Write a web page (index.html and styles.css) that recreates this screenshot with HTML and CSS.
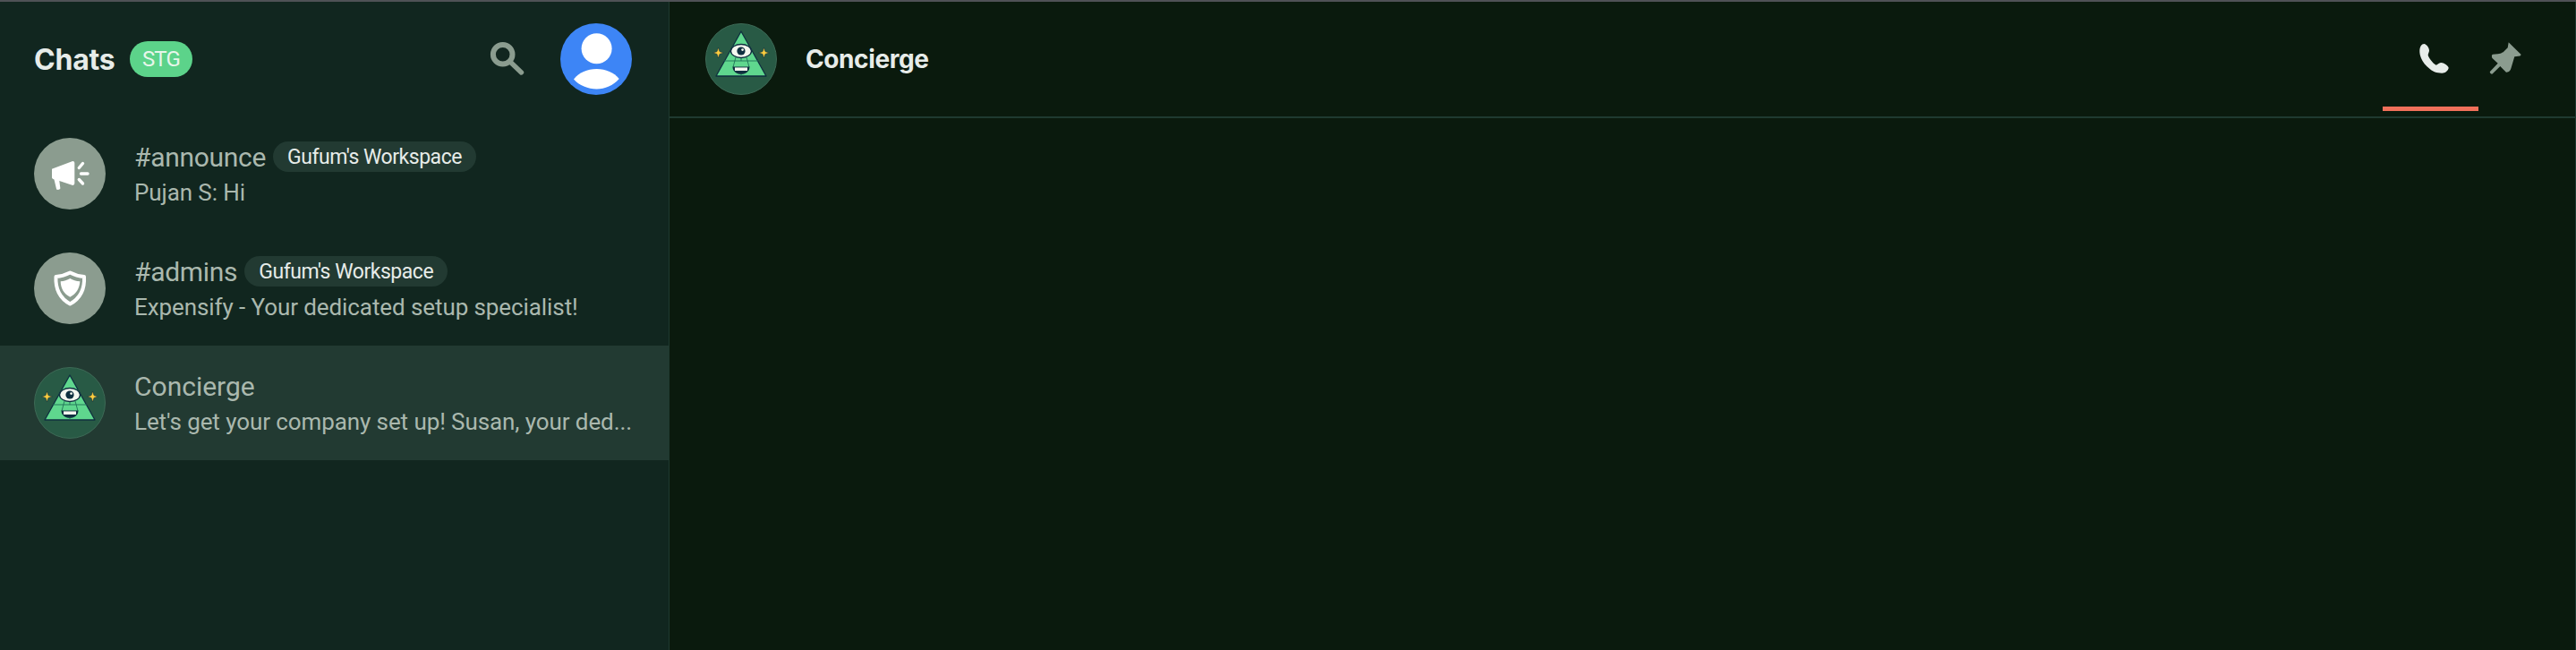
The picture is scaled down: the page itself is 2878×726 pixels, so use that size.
FILE: index.html
```html
<!DOCTYPE html>
<html lang="en">
<head>
<meta charset="utf-8">
<title>Chats</title>
<link rel="stylesheet" href="styles.css">
</head>
<body>
<svg class="defs" width="0" height="0" aria-hidden="true">
  <symbol id="concierge" viewBox="0 0 80 80">
    <circle cx="40" cy="40" r="39.5" fill="#285a45" stroke="#3d6a56" stroke-width="1"/>
    <path d="M40 9 L68 59 H12 Z" fill="#5fd78e" stroke="#0f2f3f" stroke-width="1.3" stroke-linejoin="round"/>
    <path d="M30 26 H50 M21 42 H59 M34 38 L31 49 M46 38 L49 49 M40 38 V42 M40 56 V59" fill="none" stroke="#1f7058" stroke-width=".9"/>
    <ellipse cx="40" cy="31" rx="11.5" ry="7.5" fill="#f4f7ef" stroke="#0f2f3f" stroke-width="1.3"/>
    <circle cx="40" cy="31" r="4.6" fill="#0f2f3f"/>
    <circle cx="41.6" cy="29.6" r="1.4" fill="#f4f7ef"/>
    <path d="M30.5 48.5 H49.5 C49.5 53.5 45.5 56.8 40 56.8 C34.5 56.8 30.5 53.5 30.5 48.5 Z" fill="#0f2f3f"/>
    <path d="M33 49.4 H47 V53 H33 Z" fill="#f4f7ef"/>
    <path d="M14.5 27 L16 31.6 L20.5 33 L16 34.4 L14.5 39 L13 34.4 L8.5 33 L13 31.6 Z" fill="#fbcd3e" stroke="#0f2f3f" stroke-width=".6"/>
    <path d="M65.5 27 L67 31.6 L71.5 33 L67 34.4 L65.5 39 L64 34.4 L59.5 33 L64 31.6 Z" fill="#fbcd3e" stroke="#0f2f3f" stroke-width=".6"/>
  </symbol>
</svg>
<div class="app">
  <aside class="sidebar">
    <header class="side-head">
      <h1 class="brand">Chats</h1>
      <span class="env">STG</span>
      <button class="search" type="button" aria-label="Search">
        <svg width="40" height="40" viewBox="0 0 40 40"><circle cx="14.7" cy="14.7" r="10.8" fill="none" stroke="#8b9c8f" stroke-width="6"/><path d="M23.5 23.5 L35.5 35" fill="none" stroke="#8b9c8f" stroke-width="5.4" stroke-linecap="round"/></svg>
      </button>
      <svg class="avatar" viewBox="0 0 80 80" role="img" aria-label="Profile">
        <circle cx="40" cy="40" r="40" fill="#3d85f6"/>
        <circle cx="40.6" cy="28.3" r="17" fill="#fff"/>
        <path d="M15 62.5 C21 55 30 51 40.6 51 C51 51 60 55 65.7 62 C59 69.5 50 73.4 40.6 73.4 C31 73.4 21 69.5 15 62.5 Z" fill="#fff"/>
      </svg>
    </header>
    <ul class="chat-list">
      <li class="chat">
        <svg class="avatar" viewBox="0 0 80 80" aria-hidden="true">
          <circle cx="40" cy="40" r="40" fill="#8b9c8f"/>
          <path d="M20.5 34.5 C20 34.5 20 35 20 36 V44 C20 45.5 21 46 22.5 46.4 L25 57 C25.3 58.3 28.7 58.2 29.4 56.6 L28.3 48 L42.5 52.8 C44 53.2 45.3 52 45.3 50.7 V28 C45.3 26.6 44 25.6 42.5 26.2 Z" fill="#fff"/>
          <path d="M50.3 33.5 L54.5 28.5 M52.5 40 H60 M50.3 46.5 L54.5 51" fill="none" stroke="#fff" stroke-width="3.4" stroke-linecap="round"/>
        </svg>
        <div class="chat-body">
          <div class="title-row"><span class="title">#announce</span><span class="pill">Gufum's Workspace</span></div>
          <div class="preview">Pujan S: Hi</div>
        </div>
      </li>
      <li class="chat">
        <svg class="avatar" viewBox="0 0 80 80" aria-hidden="true">
          <circle cx="40" cy="40" r="40" fill="#8b9c8f"/>
          <path d="M40.3 22.5 C45 25 50 26.5 56 27 C56.8 40 52 51 40.3 57.5 C28.6 51 23.8 40 24.5 27 C30.5 26.5 35.5 25 40.3 22.5 Z" fill="none" stroke="#fff" stroke-width="4" stroke-linejoin="round"/>
          <path d="M40.3 29 C43.5 31 47 32 51.3 32.3 C51 40 47 46.5 40.3 49.7 C33.6 46.5 29.7 40 29.7 32.3 C33.6 32 37 31 40.3 29 Z" fill="#fff"/>
        </svg>
        <div class="chat-body">
          <div class="title-row"><span class="title">#admins</span><span class="pill">Gufum's Workspace</span></div>
          <div class="preview">Expensify - Your dedicated setup specialist!</div>
        </div>
      </li>
      <li class="chat is-active">
        <svg class="avatar" aria-hidden="true"><use href="#concierge"/></svg>
        <div class="chat-body">
          <div class="title-row"><span class="title title-long">Concierge</span></div>
          <div class="preview">Let's get your company set up! Susan, your ded...</div>
        </div>
      </li>
    </ul>
  </aside>
  <main class="main">
    <header class="main-head">
      <svg class="avatar" aria-hidden="true"><use href="#concierge"/></svg>
      <h2 class="room">Concierge</h2>
      <button class="tab" type="button" aria-label="Call">
        <svg width="42" height="42" viewBox="0 0 42 42"><path d="M3.3 10.7 C3.5 6 5.5 3 8.3 3 C11 3.5 14.3 7.5 14 10.7 C13.8 12.5 12.7 14 12.7 15.7 C14 19.5 18 24.5 21.7 26.7 C23.5 26 25.5 24 27.5 24 C30 24 35.7 27.5 35.7 30 C35 33 32 35.7 28.3 35.7 C22 35.7 18 33.8 15 31.3 C10 27.5 6.5 23 5 19 C3.8 16 3.2 13 3.3 10.7 Z" fill="#e7ece9"/></svg>
      </button>
      <button class="pin" type="button" aria-label="Pin">
        <svg width="42" height="42" viewBox="0 0 42 42"><path d="M24.7 2.3 L38.7 16 L37.5 17.6 L31.3 18.3 L27.5 31 C27 33.5 25 36 22 35.7 L15.3 29 L6.6 37.6 C5.5 38.3 3.2 36.2 3.9 35 L12.7 25.7 L6.5 20 C5.5 18 5.8 16 7 15.7 C11 15.5 15.5 15 18.7 13.3 L23.7 8.3 Z" fill="#8b9c8f"/></svg>
      </button>
    </header>
  </main>
</div>
</body>
</html>
```

FILE: styles.css
```css
* { box-sizing: border-box; }
html, body { margin: 0; height: 100%; }
body {
  background: #0a1a0d;
  color: #e7ece9;
  font-family: Roboto, "Liberation Sans", sans-serif;
  overflow: hidden;
}
.defs { position: absolute; }
.app {
  display: flex;
  height: 726px;
  border-top: 2px solid #4f5256;
}
.sidebar {
  width: 748px;
  flex: none;
  background: #11261f;
  border-right: 1px solid #1f3a30;
}
.side-head {
  display: flex;
  align-items: center;
  height: 128px;
  padding: 0 41px 0 38px;
}
.brand {
  margin: 0;
  width: 90px;
  font-family: Inter, Roboto, sans-serif;
  font-size: 32px;
  font-weight: 700;
  letter-spacing: -0.2px;
  white-space: nowrap;
}
.env {
  margin-left: 17px;
  display: flex;
  align-items: center;
  justify-content: center;
  width: 70px;
  height: 40px;
  border-radius: 20px;
  background: #5cd38a;
  color: #e7f6ea;
  font-size: 24px;
  letter-spacing: -0.8px;
}
button {
  padding: 0;
  border: 0;
  background: none;
  display: flex;
}
.search { margin-left: auto; margin-right: 39px; }
.avatar { width: 80px; height: 80px; flex: none; display: block; }
.chat-list { list-style: none; margin: 0; padding: 0; }
.chat {
  display: flex;
  align-items: center;
  gap: 32px;
  height: 128px;
  padding: 0 38px;
}
.chat.is-active { background: #223a32; }
.chat-body { min-width: 0; flex: 1; }
.title-row { display: flex; align-items: center; gap: 8px; height: 38px; }
.title {
  font-size: 30px;
  color: #aab8ae;
  letter-spacing: -0.3px;
}
.title-long { letter-spacing: 0; }
.pill {
  display: flex;
  align-items: center;
  height: 34px;
  padding: 0 16px;
  border-radius: 17px;
  background: #223a32;
  color: #e7ece9;
  font-size: 23px;
  letter-spacing: -0.47px;
}
.preview {
  margin-top: 4px;
  font-size: 26px;
  line-height: 34px;
  color: #aab8ae;
  letter-spacing: -0.09px;
  white-space: nowrap;
}
.main { flex: 1; min-width: 0; border-right: 1px solid #1f3a30; }
.main-head {
  display: flex;
  align-items: center;
  height: 130px;
  padding: 0 0 0 40px;
  border-bottom: 2px solid #1f3a30;
}
.room {
  margin: 0 0 0 32px;
  font-family: Inter, Roboto, sans-serif;
  font-size: 28px;
  font-weight: 700;
  letter-spacing: -0.4px;
}
.tab {
  margin-left: auto;
  align-self: flex-start;
  width: 107px;
  height: 122px;
  align-items: center;
  justify-content: center;
  padding: 13px 0 0 11px;
  border-bottom: 5px solid #f0705a;
}
.pin { margin: 0 57px 0 9px; }
```
